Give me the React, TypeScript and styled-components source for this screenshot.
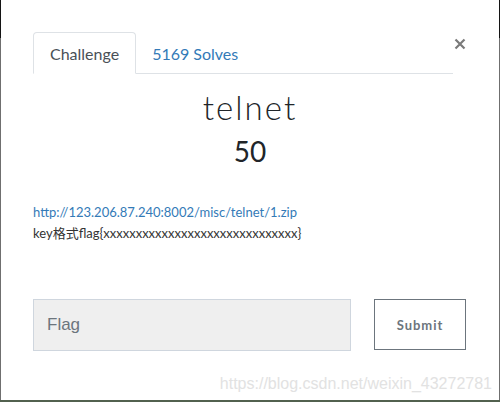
import React from "react";
import styled, { createGlobalStyle } from "styled-components";

const Global = createGlobalStyle`
  html, body { margin: 0; padding: 0; background: #fff; }
  body { font-family: Lato, "Noto Sans", sans-serif; }
  * { box-sizing: border-box; }
`;

const Frame = styled.div`
  width: 500px;
  height: 402px;
  padding: 0 1px 2px 1px;
  background:
    linear-gradient(#52614f, #52614f) bottom / 100% 2px no-repeat,
    linear-gradient(to bottom, #141414 0 38px, #6f6f6f 38px 100%);
`;

const Panel = styled.div`
  position: relative;
  width: 100%;
  height: 100%;
  background: #fff;
  padding: 32px 0 0 32px;
  display: flex;
  flex-direction: column;
`;

const Header = styled.div`
  display: flex;
  align-items: flex-start;
`;

const TabList = styled.div`
  width: 420px;
  display: flex;
  border-bottom: 1px solid #dee2e6;
`;

const Tab = styled.div<{ $active?: boolean }>`
  height: 42px;
  margin-bottom: -1px;
  padding: 0 16px;
  display: flex;
  align-items: center;
  font-size: 16px;
  color: ${(p) => (p.$active ? "#495057" : "#337ab7")};
  background: ${(p) => (p.$active ? "#fff" : "transparent")};
  border: ${(p) => (p.$active ? "1px solid #dee2e6" : "none")};
  border-bottom-color: #fff;
  border-radius: 4px 4px 0 0;
`;

const Close = styled.div`
  margin: 5px 0 0 0;
  width: 14px;
  height: 14px;
  display: flex;
  align-items: center;
  justify-content: center;
`;

const Title = styled.div`
  margin-top: 13px;
  width: 434px;
  text-align: center;
  font-weight: 300;
  font-size: 33px;
  letter-spacing: 2px;
  line-height: 40px;
  color: #212529;
`;

const Value = styled.div`
  margin-top: 4px;
  width: 434px;
  text-align: center;
  font-weight: 400;
  font-size: 28px;
  line-height: 40px;
  color: #212529;
`;

const Description = styled.div`
  margin-top: 31px;
  font-size: 13px;
  color: #333;
  font-family: Lato, "Noto Sans CJK SC", sans-serif;
`;

const Line = styled.div`
  height: 21px;
  line-height: 21px;
  white-space: nowrap;
`;

const Link = styled.a`
  color: #337ab7;
  text-decoration: none;
`;

const Form = styled.div`
  margin-top: 55px;
  display: flex;
  align-items: flex-start;
`;

const Input = styled.div`
  width: 318px;
  height: 52px;
  background: #efefef;
  border: 1px solid #cfd6de;
  display: flex;
  align-items: center;
  padding-left: 13px;
  font-family: "Liberation Sans", Arial, sans-serif;
  font-size: 17px;
  color: #6c757d;
`;

const Button = styled.div`
  margin-left: 23px;
  width: 92px;
  height: 51px;
  border: 1px solid #6c757d;
  display: flex;
  align-items: center;
  justify-content: center;
  font-weight: 700;
  font-size: 13px;
  letter-spacing: 1px;
  color: #6c757d;
`;

const Watermark = styled.div`
  position: absolute;
  right: 7px;
  bottom: 7px;
  font-family: "Liberation Sans", Arial, sans-serif;
  font-size: 16px;
  color: #e2e2e2;
  white-space: nowrap;
`;

export default function App() {
  return (
    <>
      <Global />
      <Frame>
        <Panel>
          <Header>
            <TabList>
              <Tab $active>Challenge</Tab>
              <Tab>5169 Solves</Tab>
            </TabList>
            <Close>
              <svg width="12" height="12" viewBox="0 0 12 12">
                <path d="M1.5 1.5 L10.5 10.5 M10.5 1.5 L1.5 10.5" stroke="#7a7a7a" strokeWidth="2.2" />
              </svg>
            </Close>
          </Header>
          <Title>telnet</Title>
          <Value>50</Value>
          <Description>
            <Line>
              <Link href="#">http://123.206.87.240:8002/misc/telnet/1.zip</Link>
            </Line>
            <Line>key格式flag{"{"}xxxxxxxxxxxxxxxxxxxxxxxxxxxxxx{"}"}</Line>
          </Description>
          <Form>
            <Input>Flag</Input>
            <Button>Submit</Button>
          </Form>
          <Watermark>https://blog.csdn.net/weixin_43272781</Watermark>
        </Panel>
      </Frame>
    </>
  );
}
